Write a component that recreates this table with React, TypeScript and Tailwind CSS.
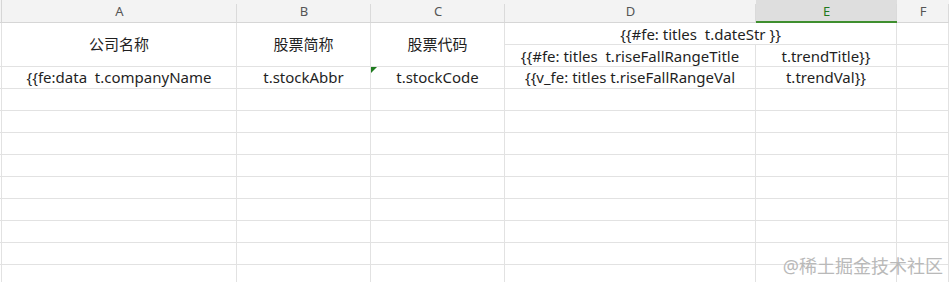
import React from "react";

const cols = ["A", "B", "C", "D", "E", "F"];
const font = { fontFamily: '"Noto Sans", "Noto Sans CJK SC", "Microsoft YaHei", sans-serif' };

// a single grid cell with right + bottom hairlines
function Cell({
  className = "",
  children,
}: {
  className?: string;
  children?: React.ReactNode;
}) {
  return (
    <div
      className={`relative flex items-center justify-center border-r border-b border-[#e2e2e2] bg-white text-[15px] leading-none text-[#1f1f1f] whitespace-pre ${className}`}
    >
      {children}
    </div>
  );
}

export default function App() {
  const blankRows = Array.from({ length: 9 });

  return (
    <div className="relative h-[282px] w-[949px] overflow-hidden bg-white" style={font}>
      <div className="grid grid-cols-[2px_235px_134px_134px_251px_141px_52px] grid-rows-[23px_repeat(12,22px)]">
        {/* column header strip */}
        <div className="border-r border-b border-[#d6d6d6] bg-[#f3f3f3]" />
        {cols.map((c) => {
          const active = c === "E";
          return (
            <div
              key={c}
              className={`relative flex items-center justify-center text-[13px] leading-none ${
                active
                  ? "bg-[#dedede] text-[#1f7a1f] border-b-2 border-[#3f8f2f]"
                  : "bg-[#f3f3f3] text-[#555] border-b border-[#d6d6d6]"
              } after:absolute after:right-0 after:top-1 after:bottom-0 after:w-px after:bg-[#dadada]`}
            >
              <span className={active ? "mt-[1px]" : ""}>{c}</span>
            </div>
          );
        })}

        {/* row 1-2: titles */}
        <div className="row-span-2 border-r border-b border-[#e2e2e2] bg-white" />
        <Cell className="row-span-2">公司名称</Cell>
        <Cell className="row-span-2">股票简称</Cell>
        <Cell className="row-span-2">股票代码</Cell>
        <Cell className="col-span-2 pt-[1px]">{"{{#fe: titles  t.dateStr }}"}</Cell>
        <Cell />
        <Cell className="pt-[2px]">{"{{#fe: titles  t.riseFallRangeTitle"}</Cell>
        <Cell className="pt-[2px]">{"t.trendTitle}}"}</Cell>
        <Cell />

        {/* row 3: data bindings */}
        <div className="border-r border-b border-[#e2e2e2] bg-white" />
        <Cell>{"{{fe:data  t.companyName"}</Cell>
        <Cell>t.stockAbbr</Cell>
        <Cell>
          <span className="absolute left-0 top-0 h-0 w-0 border-t-[6px] border-r-[6px] border-t-[#1e7b1e] border-r-transparent" />
          t.stockCode
        </Cell>
        <Cell>{"{{v_fe: titles t.riseFallRangeVal"}</Cell>
        <Cell>{"t.trendVal}}"}</Cell>
        <Cell />

        {/* empty rows */}
        {blankRows.map((_, r) => (
          <React.Fragment key={r}>
            <div className="border-r border-b border-[#e2e2e2] bg-white" />
            {cols.map((c) => (
              <Cell key={c} />
            ))}
          </React.Fragment>
        ))}
      </div>

      <div className="absolute right-[6px] bottom-[7px] text-[18px] leading-none text-[#b9b9b9]">
        @稀土掘金技术社区
      </div>
    </div>
  );
}
